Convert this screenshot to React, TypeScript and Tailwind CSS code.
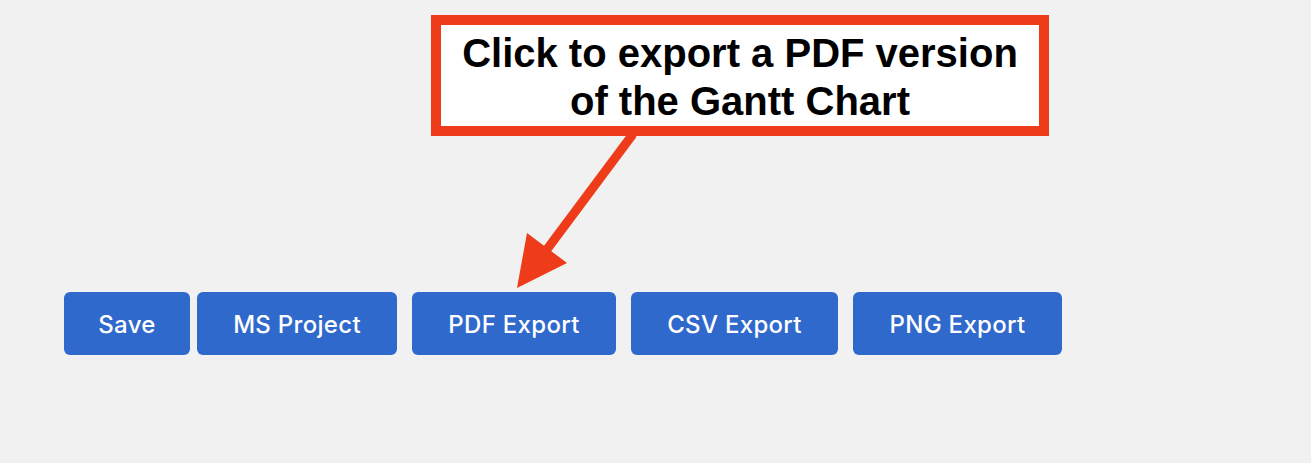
export default function App() {
  const buttons = [
    { label: "Save", w: "w-[126px]", ml: "" },
    { label: "MS Project", w: "w-[200px]", ml: "ml-[7px]" },
    { label: "PDF Export", w: "w-[204px]", ml: "ml-[15px]" },
    { label: "CSV Export", w: "w-[207px]", ml: "ml-[15px]" },
    { label: "PNG Export", w: "w-[209px]", ml: "ml-[15px]" },
  ];

  return (
    <div className="relative w-full h-[463px] bg-[#f1f1f1] overflow-hidden">
      {/* callout */}
      <div className="ml-[431px] pt-[15px]">
        <div className="w-[618px] h-[121px] border-[10px] border-[#ee3b1a] bg-white flex items-center justify-center text-center font-bold text-[40px] leading-[48px] text-black font-['Liberation_Sans',Arial,sans-serif]">
          <p className="pt-[2px]">
            Click to export a PDF version
            <br />
            of the Gantt Chart
          </p>
        </div>
      </div>

      {/* arrow */}
      <svg className="absolute left-0 top-0 pointer-events-none" width="1311" height="463">
        <line x1="633" y1="134" x2="545" y2="252" stroke="#ee3b1a" strokeWidth="9" />
        <polygon points="527,233 567,263 517,288" fill="#ee3b1a" />
      </svg>

      {/* toolbar */}
      <div className="flex mt-[156px] ml-[64px]">
        {buttons.map((b) => (
          <button
            key={b.label}
            className={`${b.w} ${b.ml} h-[63px] pt-[3px] rounded-[6px] bg-[#2f69cc] text-white text-[24px] font-medium tracking-[0.3px] font-['Inter',sans-serif]`}
          >
            {b.label}
          </button>
        ))}
      </div>
    </div>
  );
}
